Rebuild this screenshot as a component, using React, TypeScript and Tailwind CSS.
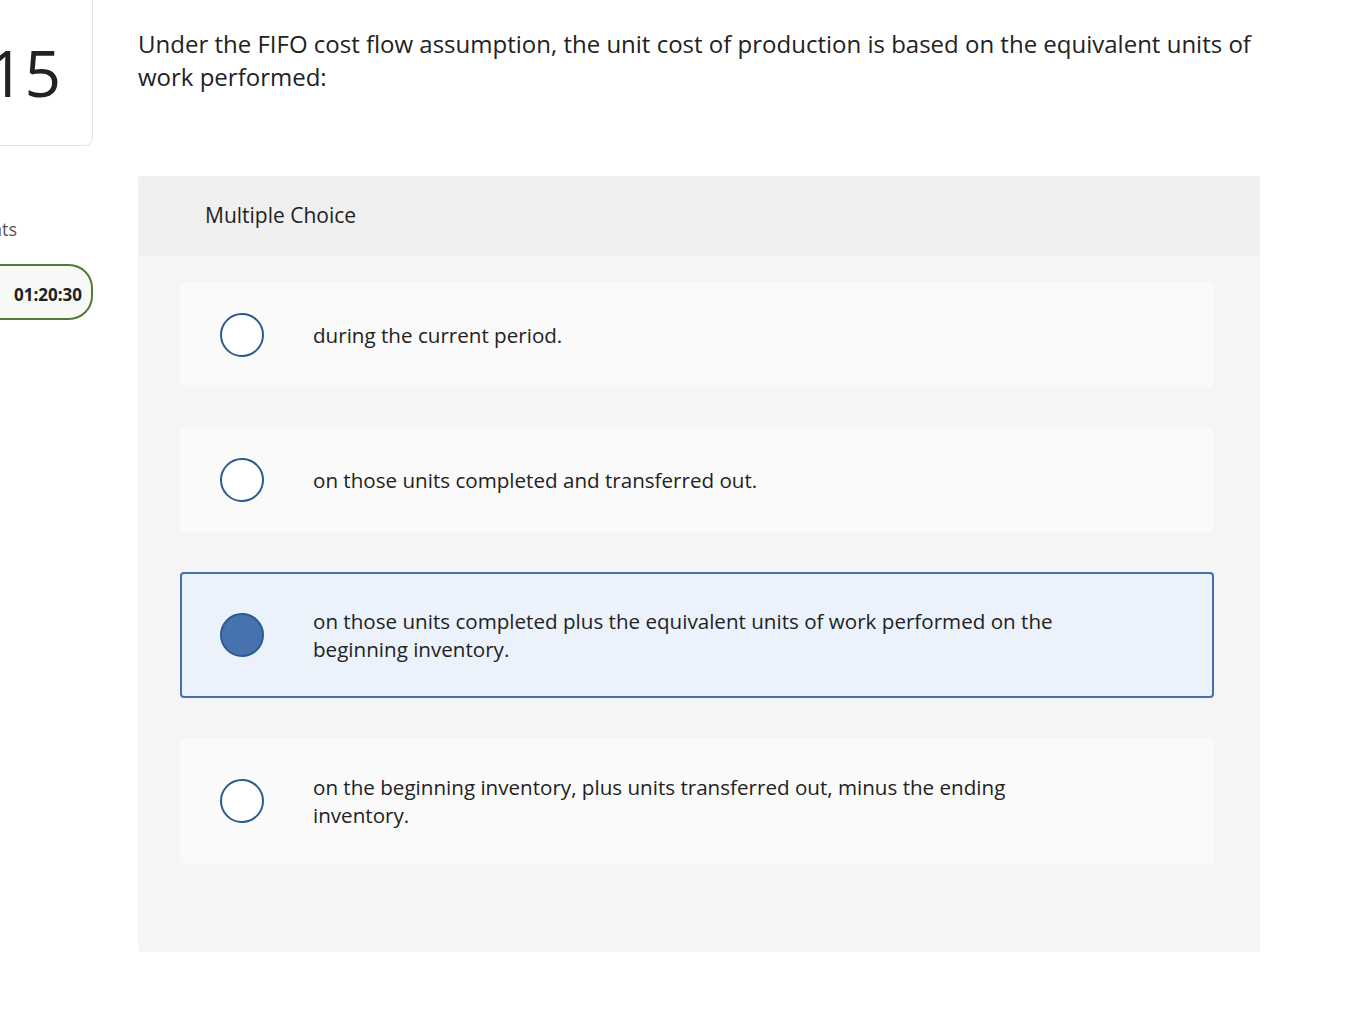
const options = [
  { text: "during the current period.", selected: false },
  { text: "on those units completed and transferred out.", selected: false },
  {
    text: "on those units completed plus the equivalent units of work performed on the beginning inventory.",
    selected: true,
  },
  {
    text: "on the beginning inventory, plus units transferred out, minus the ending inventory.",
    selected: false,
  },
];

export default function App() {
  return (
    <div
      className="flex min-h-[1014px] bg-white text-[#222]"
      style={{ fontFamily: "'Open Sans', 'Noto Sans', sans-serif" }}
    >
      {/* left rail */}
      <div className="flex w-[93px] shrink-0 flex-col">
        <div className="flex h-[146px] items-center justify-end overflow-hidden rounded-br-[8px] border-r border-b border-[#e4e4e4] pr-[31px]">
          <span className="whitespace-nowrap text-[64px] leading-none text-[#222]">215</span>
        </div>
        <div className="mt-[70px] flex justify-end overflow-hidden whitespace-nowrap pr-[76px] text-[18px] text-[#555]">
          Points
        </div>
        <div className="mt-[21px] flex h-[56px] items-center justify-end rounded-r-[24px] border-2 border-l-0 border-[#4f7a3b] bg-[#f7f9f6] pt-[6px] pr-[9px]">
          <span className="text-[17px] font-bold text-[#222]">01:20:30</span>
        </div>
      </div>

      {/* main */}
      <div className="ml-[45px] w-[1122px] pt-[27px]">
        <p className="text-[24px] leading-[33px] text-[#222]">
          Under the FIFO cost flow assumption, the unit cost of production is based on the equivalent units of
          work performed:
        </p>

        <div className="mt-[83px] overflow-hidden rounded-[4px] bg-[#f5f5f5]">
          <div className="flex h-[80px] items-center bg-[#f0f0f0] px-[67px] text-[21px]">Multiple Choice</div>
          <div className="flex flex-col gap-[40px] pt-[26px] pr-[46px] pb-[88px] pl-[42px]">
            {options.map((o) => (
              <div
                key={o.text}
                className={
                  o.selected
                    ? "flex items-center rounded-[4px] border-2 border-[#4470ad] bg-[#ebf2fb] py-[28px] pl-[38px] pr-[134px]"
                    : "flex min-h-[105px] items-center rounded-[6px] bg-[#fafafa] py-[30px] pl-[40px] pr-[136px]"
                }
              >
                <span
                  className={
                    o.selected
                      ? "h-[44px] w-[44px] shrink-0 rounded-full border-2 border-[#2d5a8e] bg-[#4673b0]"
                      : "h-[44px] w-[44px] shrink-0 rounded-full border-2 border-[#2d5a8e] bg-white"
                  }
                />
                <span className="ml-[49px] py-[5px] text-[20.6px] leading-[28px] text-[#222]">{o.text}</span>
              </div>
            ))}
          </div>
        </div>
      </div>
    </div>
  );
}
